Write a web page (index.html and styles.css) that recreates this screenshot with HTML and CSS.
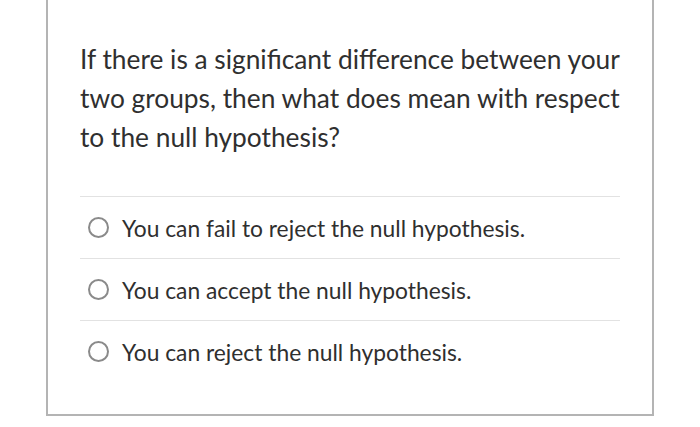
FILE: index.html
```html
<!DOCTYPE html>
<html>
<head>
<meta charset="utf-8">
<link rel="stylesheet" href="styles.css">
</head>
<body>
<div class="card">
  <p class="question">If there is a significant difference between your two groups, then what does mean with respect to the null hypothesis?</p>
  <ul class="answers">
    <li class="answer"><span class="radio"></span><span class="label">You can fail to reject the null hypothesis.</span></li>
    <li class="answer"><span class="radio"></span><span class="label">You can accept the null hypothesis.</span></li>
    <li class="answer"><span class="radio"></span><span class="label">You can reject the null hypothesis.</span></li>
  </ul>
</div>
</body>
</html>
```

FILE: styles.css
```css
html, body {
  margin: 0;
  padding: 0;
  background: #fff;
}
body {
  font-family: Lato, "Liberation Sans", sans-serif;
  color: #2f2f2f;
}
.card {
  margin-left: 46px;
  width: 608px;
  border: 2px solid #b4b4b4;
  border-top: none;
  padding: 40px 32px 32px 32px;
  box-sizing: border-box;
}
.question {
  margin: 0;
  font-size: 26.3px;
  line-height: 38.8px;
  padding-bottom: 40px;
  border-bottom: 1px solid #e2e2e2;
}
.question-text {
  display: block;
}
.answers {
  list-style: none;
  margin: 0;
  padding: 0;
}
.answer {
  display: flex;
  align-items: center;
  height: 61px;
  padding-left: 8px;
  border-bottom: 1px solid #e2e2e2;
  font-size: 22.8px;
}
.answer:last-child {
  border-bottom: none;
}
.radio {
  width: 17px;
  height: 17px;
  border: 2px solid #8a8a8a;
  border-radius: 50%;
  margin-right: 13px;
  flex: none;
}
```
